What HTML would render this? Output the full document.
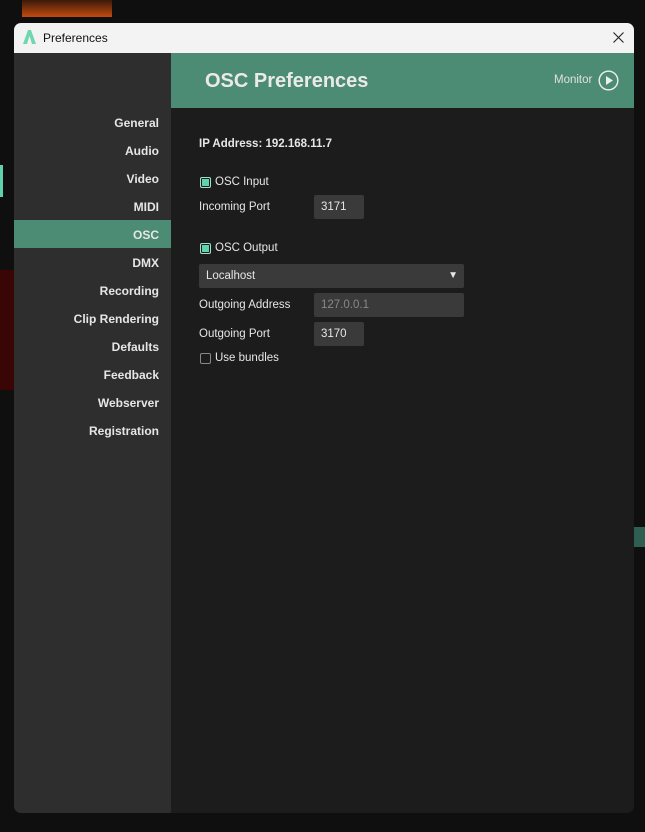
<!DOCTYPE html>
<html><head><style>
body{margin:0;width:645px;height:832px;background:#0f0f0f;position:relative;overflow:hidden;font-family:"Liberation Sans",sans-serif;}
.win{position:absolute;left:14px;top:23px;width:620px;height:790px;border-radius:7px;overflow:hidden;background:#1c1c1c;}
.title{position:absolute;left:0;top:0;width:620px;height:30px;background:#f3f3f3;color:#111;font-size:12px;}
.side{position:absolute;left:0;top:30px;width:157px;height:760px;background:#2e2e2e;}
.side div{position:absolute;right:12px;font-size:12px;font-weight:bold;color:#e6e6e6;}
.sel{position:absolute;left:0;top:197px;width:157px;height:28px;background:#4d8c74;}
.hdr{position:absolute;left:157px;top:30px;width:463px;height:55px;background:#4d8c74;}
.t{position:absolute;font-size:11.5px;color:#e6e6e6;}
.box{position:absolute;background:#3a3a3a;border-radius:2px;font-size:11.5px;color:#e6e6e6;box-sizing:border-box;padding-left:7px;}
.cb{position:absolute;width:9px;height:9px;border:1px solid #9fe0c8;background:#5fd3a9;border-radius:2px;box-shadow:inset 0 0 0 1px #1c1c1c;}
</style></head><body>
<div style="position:absolute;left:22px;top:0;width:90px;height:17px;background:linear-gradient(#3a1a08,#c44a10);"></div>
<div style="position:absolute;left:0;top:165px;width:3px;height:32px;background:#5fd3a9"></div>
<div style="position:absolute;left:0;top:270px;width:14px;height:120px;background:#3a0505"></div>
<div style="position:absolute;left:634px;top:527px;width:11px;height:20px;background:#2f5f50"></div>
<div class="win">
<div class="title">
<svg style="position:absolute;left:8px;top:6px" width="15" height="16" viewBox="0 0 15 16"><path d="M1 15 L6 1 H9 L14 15 H10 L7.5 7 L5 15Z" fill="#6fd6b0"/></svg>
<span style="position:absolute;left:29px;top:8px">Preferences</span>
<svg style="position:absolute;left:599px;top:9px" width="11" height="11" viewBox="0 0 11 11"><path d="M0.5 0.5 L10.5 10.5 M10.5 0.5 L0.5 10.5" stroke="#222" stroke-width="1.1"/></svg>
</div>
<div class="side">
<div class="sel" style="top:167px;right:auto"></div>
<div style="top:63px">General</div><div style="top:91px">Audio</div><div style="top:119px">Video</div><div style="top:147px">MIDI</div><div style="top:175px">OSC</div><div style="top:203px">DMX</div><div style="top:231px">Recording</div><div style="top:259px">Clip Rendering</div><div style="top:287px">Defaults</div><div style="top:315px">Feedback</div><div style="top:343px">Webserver</div><div style="top:371px">Registration</div>
</div>
<div class="hdr">
<span style="position:absolute;left:34px;top:17px;font-size:20px;font-weight:bold;color:#eaeaea">OSC Preferences</span>
<span style="position:absolute;left:383px;top:21px;font-size:11.5px;color:#e0e0e0">Monitor</span>
<svg style="position:absolute;left:427px;top:17px" width="21" height="21" viewBox="0 0 21 21"><circle cx="10.5" cy="10.5" r="9.3" fill="none" stroke="#eee" stroke-width="1.4"/><path d="M8 6 L15 10.5 L8 15Z" fill="#eee"/></svg>
</div>
<div class="t" style="left:185px;top:115px;font-weight:bold">IP Address: 192.168.11.7</div>
<div class="cb" style="left:186px;top:154px"></div><div class="t" style="left:201px;top:153px">OSC Input</div>
<div class="t" style="left:185px;top:178px">Incoming Port</div>
<div class="box" style="left:300px;top:172px;width:50px;height:24px;line-height:24px">3171</div>
<div class="cb" style="left:186px;top:220px"></div><div class="t" style="left:201px;top:219px">OSC Output</div>
<div class="box" style="left:185px;top:241px;width:265px;height:24px;line-height:24px">Localhost<span style="position:absolute;right:6px;font-size:10px">▼</span></div>
<div class="t" style="left:185px;top:276px">Outgoing Address</div>
<div class="box" style="left:300px;top:270px;width:150px;height:24px;line-height:24px;color:#888">127.0.0.1</div>
<div class="t" style="left:185px;top:305px">Outgoing Port</div>
<div class="box" style="left:300px;top:299px;width:50px;height:24px;line-height:24px">3170</div>
<div style="position:absolute;left:186px;top:330px;width:9px;height:9px;border:1px solid #888;border-radius:2px"></div><div class="t" style="left:201px;top:329px">Use bundles</div>
</div>
</body></html>
